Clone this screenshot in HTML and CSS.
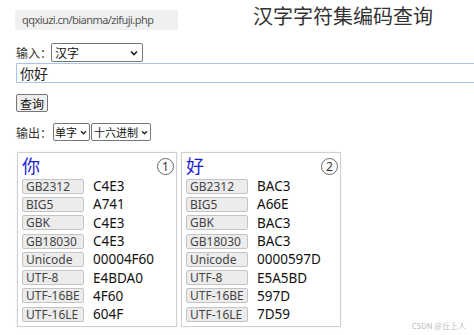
FILE: index.html
```html
<!DOCTYPE html>
<html lang="zh">
<head>
<meta charset="utf-8">
<link rel="stylesheet" href="styles.css">
</head>
<body>
<div class="page">
  <div class="top">
    <div class="url">qqxiuzi.cn/bianma/zifuji.php</div>
    <h1 class="title">汉字字符集编码查询</h1>
  </div>
  <div class="row in-row">
    <span class="lbl">输入：</span>
    <select class="sel sel-in"><option>汉字</option></select>
  </div>
  <input class="text" type="text" value="你好">
  <div class="btn-row"><button class="btn">查询</button></div>
  <div class="row out-row">
    <span class="lbl">输出：</span>
    <select class="sel sel-a"><option>单字</option></select>
    <select class="sel sel-b"><option>十六进制</option></select>
  </div>
  <div class="cards">
    <div class="card">
      <div class="card-head"><span class="ch">你</span><span class="num">1</span></div>
      <div class="item"><span class="tag">GB2312</span><span class="val">C4E3</span></div>
      <div class="item"><span class="tag">BIG5</span><span class="val">A741</span></div>
      <div class="item"><span class="tag">GBK</span><span class="val">C4E3</span></div>
      <div class="item"><span class="tag">GB18030</span><span class="val">C4E3</span></div>
      <div class="item"><span class="tag">Unicode</span><span class="val">00004F60</span></div>
      <div class="item"><span class="tag">UTF-8</span><span class="val">E4BDA0</span></div>
      <div class="item"><span class="tag">UTF-16BE</span><span class="val">4F60</span></div>
      <div class="item"><span class="tag">UTF-16LE</span><span class="val">604F</span></div>
    </div>
    <div class="card">
      <div class="card-head"><span class="ch">好</span><span class="num">2</span></div>
      <div class="item"><span class="tag">GB2312</span><span class="val">BAC3</span></div>
      <div class="item"><span class="tag">BIG5</span><span class="val">A66E</span></div>
      <div class="item"><span class="tag">GBK</span><span class="val">BAC3</span></div>
      <div class="item"><span class="tag">GB18030</span><span class="val">BAC3</span></div>
      <div class="item"><span class="tag">Unicode</span><span class="val">0000597D</span></div>
      <div class="item"><span class="tag">UTF-8</span><span class="val">E5A5BD</span></div>
      <div class="item"><span class="tag">UTF-16BE</span><span class="val">597D</span></div>
      <div class="item"><span class="tag">UTF-16LE</span><span class="val">7D59</span></div>
    </div>
  </div>
  <div class="watermark">CSDN @丘上人</div>
</div>
</body>
</html>
```

FILE: styles.css
```css
html, body {
  margin: 0;
  padding: 0;
  background: #fff;
  overflow: hidden;
}
body {
  font-family: "Noto Sans", "Noto Sans CJK SC", sans-serif;
  color: #222;
  font-size: 12px;
}
.page {
  position: relative;
  width: 474px;
  height: 335px;
  padding-left: 16px;
  box-sizing: border-box;
  display: flex;
  flex-direction: column;
}
.top {
  display: flex;
  align-items: flex-start;
  height: 43px;
}
.url {
  margin-top: 10px;
  width: 163px;
  height: 20px;
  box-sizing: border-box;
  background: #f0f0f0;
  color: #555;
  font-size: 11px;
  letter-spacing: -0.55px;
  line-height: 20px;
  padding-left: 7px;
  margin-left: -1px;
}
.title {
  margin: 2px 0 0 75px;
  font-size: 20px;
  font-weight: normal;
  line-height: 28px;
  color: #333;
  font-family: "Noto Sans CJK SC", sans-serif;
}
.row {
  display: flex;
  align-items: center;
}
.lbl {
  font-size: 12px;
  color: #333;
  font-family: "Noto Sans CJK SC", sans-serif;
}
.sel {
  -webkit-appearance: none;
  appearance: none;
  height: 19px;
  font-family: "Noto Sans CJK SC", sans-serif;
  font-size: 12px;
  line-height: 17px;
  padding: 0 0 0 3px;
  border: 1px solid #767676;
  border-radius: 2px;
  background-color: #fff;
  background-image: url("data:image/svg+xml,%3Csvg xmlns='http://www.w3.org/2000/svg' width='8' height='6' viewBox='0 0 8 6'%3E%3Cpath d='M1 1.5 L4 4.5 L7 1.5' fill='none' stroke='%23222' stroke-width='1.6'/%3E%3C/svg%3E");
  background-repeat: no-repeat;
  background-position: right 4px center;
  background-size: 8px 6px;
  color: #111;
  box-sizing: border-box;
}
.in-row { height: 19px; }
.sel-in { width: 92px; margin-left: -1px; }
.text {
  margin-top: 1px;
  width: 470px;
  height: 20px;
  box-sizing: border-box;
  border: 1px solid #a8c4ea;
  padding: 0 3px;
  font-family: "Noto Sans CJK SC", sans-serif;
  font-size: 14px;
  color: #222;
  outline: none;
}
.btn-row { margin-top: 11px; height: 18px; display: flex; }
.btn {
  height: 18px;
  width: 32px;
  padding: 0;
  font-family: "Noto Sans CJK SC", sans-serif;
  font-size: 12px;
  background: #efefef;
  border: 1px solid #767676;
  border-radius: 2px;
  color: #111;
}
.out-row { margin-top: 11px; height: 18px; }
.sel-a, .sel-b {
  height: 18px;
  margin-left: 1px;
  font-size: 11px;
  padding-left: 2px;
  background-position: right 2px center;
  background-size: 7px 5px;
}
.sel-a { width: 37px; padding-left: 1px; }
.sel-b { width: 60px; }
.cards {
  margin-top: 11px;
  display: flex;
  gap: 4px;
  margin-left: 1px;
}
.card {
  width: 160px;
  height: 175px;
  box-sizing: border-box;
  border: 1px solid #cfcfcf;
  box-shadow: 0 0 2px rgba(0,0,0,0.08);
  padding: 0 2px 0 4px;
}
.card-head {
  display: flex;
  justify-content: space-between;
  align-items: center;
  height: 24px;
}
.ch {
  color: #1d1dd6;
  font-size: 18px;
  line-height: 22px;
  font-family: "Noto Sans CJK SC", sans-serif;
}
.num {
  width: 17px;
  height: 17px;
  box-sizing: border-box;
  border: 1px solid #666;
  border-radius: 50%;
  font-size: 12px;
  line-height: 15px;
  text-align: center;
  color: #333;
  margin-top: 2px;
}
.item {
  display: flex;
  align-items: center;
  height: 18.3px;
}
.tag {
  width: 62px;
  height: 15px;
  box-sizing: border-box;
  background: #ececec;
  border: 1px solid #c4c4c4;
  border-radius: 2px;
  font-size: 12px;
  line-height: 13px;
  padding-left: 3px;
  color: #444;
}
.val {
  margin-left: 9px;
  font-size: 13.5px;
  color: #111;
}
.watermark {
  position: absolute;
  right: 8px;
  bottom: 4px;
  font-size: 8px;
  color: #bbb;
  font-family: "Noto Sans CJK SC", sans-serif;
}
```
